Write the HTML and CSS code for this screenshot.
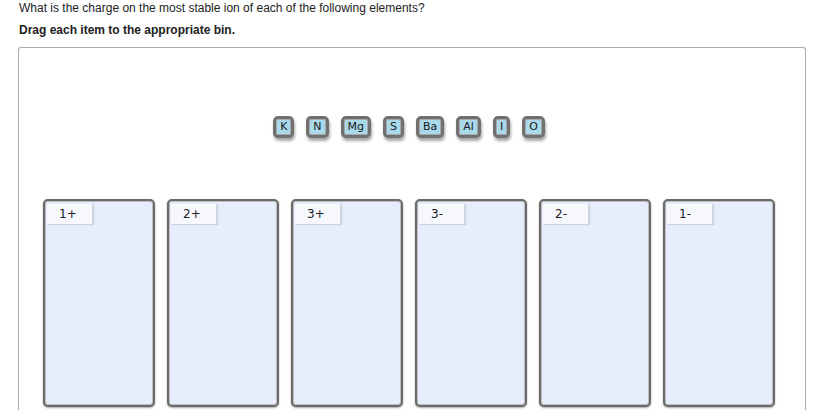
FILE: index.html
```html
<!DOCTYPE html>
<html>
<head>
<meta charset="utf-8">
<link rel="stylesheet" href="styles.css">
</head>
<body>
<div class="prompt">
  <p class="q">What is the charge on the most stable ion of each of the following elements?</p>
  <p class="instr">Drag each item to the appropriate bin.</p>
</div>
<div class="board">
  <div class="tokens">
    <span class="token">K</span>
    <span class="token">N</span>
    <span class="token">Mg</span>
    <span class="token">S</span>
    <span class="token">Ba</span>
    <span class="token">Al</span>
    <span class="token">I</span>
    <span class="token">O</span>
  </div>
  <div class="bins">
    <div class="bin"><div class="tab">1+</div></div>
    <div class="bin"><div class="tab">2+</div></div>
    <div class="bin"><div class="tab">3+</div></div>
    <div class="bin"><div class="tab">3-</div></div>
    <div class="bin"><div class="tab">2-</div></div>
    <div class="bin"><div class="tab">1-</div></div>
  </div>
</div>
</body>
</html>
```

FILE: styles.css
```css
html, body {
  margin: 0;
  padding: 0;
  background: #ffffff;
  overflow: hidden;
}
body {
  font-family: "Liberation Sans", Arial, sans-serif;
  color: #222;
  width: 837px;
  height: 410px;
}
.prompt {
  padding: 1px 0 0 19px;
}
.q {
  margin: 0;
  font-size: 12px;
  line-height: 14px;
}
.instr {
  margin: 8px 0 0 0;
  font-size: 12px;
  line-height: 14px;
  font-weight: bold;
}
.board {
  margin: 10px 0 0 18px;
  width: 788px;
  height: 363px;
  border: 1px solid #ababab;
  border-bottom: none;
  border-radius: 3px 3px 0 0;
  box-sizing: border-box;
}
.tokens {
  display: flex;
  justify-content: center;
  gap: 12px;
  margin-top: 68px;
  margin-right: 6px;
}
.token {
  height: 16px;
  line-height: 16px;
  padding: 0 4px;
  text-align: center;
  font-family: "DejaVu Sans", Verdana, sans-serif;
  font-size: 11px;
  color: #1a1a1a;
  background: #a9d9eb;
  border: 3px solid #707070;
  border-radius: 5px;
  box-shadow: inset 0 0 0 1px #a8a8a8, 1px 3px 3px rgba(0,0,0,0.35);
}
.bins {
  display: grid;
  grid-template-columns: repeat(6, 112px);
  column-gap: 12px;
  margin: 61px 0 0 24px;
}
.bin {
  height: 208px;
  box-sizing: border-box;
  background: #e6edfc;
  border: 2px solid #6a6a6a;
  border-radius: 5px;
  box-shadow: 0 1px 2px rgba(0,0,0,0.35), inset 0 0 0 1px #bdbdbd;
  padding: 3px 0 0 2px;
}
.tab {
  width: 46px;
  height: 20px;
  line-height: 20px;
  box-sizing: border-box;
  padding-left: 12px;
  background: #f6f8fe;
  border-right: 1px solid #d3d8e2;
  box-shadow: 1px 1px 1px rgba(0,0,0,0.12);
  font-family: "DejaVu Sans", Verdana, sans-serif;
  font-size: 12px;
  color: #222;
}
```
